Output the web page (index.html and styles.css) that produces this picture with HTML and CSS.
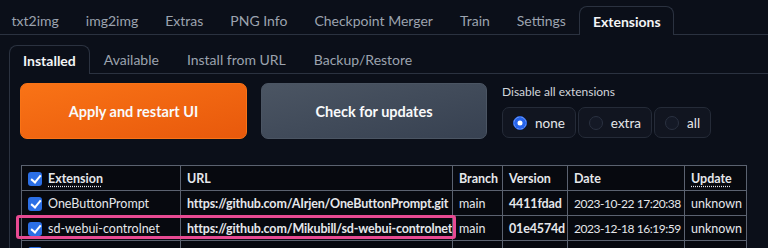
FILE: index.html
```html
<!DOCTYPE html>
<html lang="en">
<head>
<meta charset="utf-8">
<title>Extensions</title>
<link rel="stylesheet" href="styles.css">
</head>
<body>
<div class="app">
  <nav class="tabs top-tabs">
    <button class="tab">txt2img</button>
    <button class="tab">img2img</button>
    <button class="tab">Extras</button>
    <button class="tab">PNG Info</button>
    <button class="tab">Checkpoint Merger</button>
    <button class="tab">Train</button>
    <button class="tab">Settings</button>
    <button class="tab selected">Extensions</button>
  </nav>
  <div class="outer-panel">
    <nav class="tabs inner-tabs">
      <button class="tab selected">Installed</button>
      <button class="tab">Available</button>
      <button class="tab">Install from URL</button>
      <button class="tab">Backup/Restore</button>
    </nav>
    <div class="inner-panel">
      <div class="controls">
        <button class="btn primary">Apply and restart UI</button>
        <button class="btn secondary">Check for updates</button>
        <div class="radio-group">
          <div class="radio-label">Disable all extensions</div>
          <div class="radio-options">
            <label class="radio-opt"><span class="radio checked"></span>none</label>
            <label class="radio-opt"><span class="radio"></span>extra</label>
            <label class="radio-opt"><span class="radio"></span>all</label>
          </div>
        </div>
      </div>
      <div class="table-wrap">
        <table class="ext-table">
          <colgroup>
            <col class="w-ext"><col class="w-url"><col class="w-branch"><col class="w-ver"><col class="w-date"><col class="w-upd">
          </colgroup>
          <thead>
            <tr>
              <th><span class="cb"></span><abbr>Extension</abbr></th>
              <th>URL</th>
              <th>Branch</th>
              <th>Version</th>
              <th>Date</th>
              <th><abbr>Update</abbr></th>
            </tr>
          </thead>
          <tbody>
            <tr>
              <td><span class="cb"></span>OneButtonPrompt</td>
              <td class="b">https://github.com/AIrjen/OneButtonPrompt.git</td>
              <td>main</td>
              <td class="b">4411fdad</td>
              <td class="date">2023-10-22 17:20:38</td>
              <td>unknown</td>
            </tr>
            <tr>
              <td><span class="cb"></span>sd-webui-controlnet</td>
              <td class="b">https://github.com/Mikubill/sd-webui-controlnet</td>
              <td>main</td>
              <td class="b">01e4574d</td>
              <td class="date">2023-12-18 16:19:59</td>
              <td>unknown</td>
            </tr>
            <tr>
              <td><span class="cb"></span></td>
              <td></td>
              <td></td>
              <td></td>
              <td></td>
              <td></td>
            </tr>
          </tbody>
        </table>
        <div class="highlight"></div>
      </div>
    </div>
  </div>
</div>
</body>
</html>
```
FILE: styles.css
```css
* { box-sizing: border-box; }
html, body { margin: 0; padding: 0; }
body {
  background: #0b0f19;
  color: #e5e7eb;
  font-family: Lato, "Noto Sans", sans-serif;
  width: 768px;
  height: 248px;
  overflow: hidden;
}
.app { padding-top: 6px; }

.tabs {
  display: flex;
  border-bottom: 1px solid #2b3240;
}
.tab {
  font: inherit;
  font-size: 14px;
  background: none;
  color: #9ca3af;
  border: 1px solid transparent;
  border-bottom: none;
  border-radius: 8px 8px 0 0;
  height: 28px;
  padding: 0 13px;
  margin: 0 0 -1px 0;
  white-space: nowrap;
  cursor: pointer;
}
.top-tabs .tab { padding: 0 12.5px; }
.tab.selected {
  color: #f3f4f6;
  font-weight: 700;
  border-color: #2b3240;
  background: #0b0f19;
  height: 29px;
}
.top-tabs .tab:first-child { margin-left: -2px; }

.outer-panel { padding: 10px 0 0 9px; }

.inner-panel {
  border-left: 1px solid #2b3240;
  padding: 9px 0 0 10px;
  height: 200px;
}

.controls {
  display: flex;
  align-items: flex-start;
}
.btn {
  font: inherit;
  font-size: 14.5px;
  font-weight: 700;
  color: #f9fafb;
  width: 227px;
  height: 56px;
  border-radius: 7px;
  border: 1px solid transparent;
  cursor: pointer;
}
.primary {
  background: linear-gradient(to bottom right, #f97316, #e8590c);
  border-color: #f97316;
}
.secondary {
  width: 226px;
  margin-left: 14px;
  background: linear-gradient(to bottom right, #4b5563, #374151);
  border-color: #4b5563;
}
.radio-group { margin-left: 15px; }
.radio-label {
  font-size: 12px;
  color: #d1d5db;
  line-height: 18px;
}
.radio-options {
  display: flex;
  gap: 2px;
  margin-top: 6px;
}
.radio-opt {
  display: flex;
  align-items: center;
  height: 31px;
  padding: 0 10px 0 10px;
  background: #111520;
  border: 1px solid #252b38;
  border-radius: 7px;
  font-size: 13.5px;
  color: #e5e7eb;
}
.radio {
  width: 14px;
  height: 14px;
  border-radius: 50%;
  border: 1px solid #2a3140;
  background: #141926;
  margin-right: 8px;
}
.radio.checked {
  background: #ffffff;
  border-color: #2563eb;
  box-shadow: inset 0 0 0 3.5px #2563eb;
}

.table-wrap {
  position: relative;
  margin-top: 26px;
  margin-left: 1px;
}
.ext-table {
  border-collapse: collapse;
  table-layout: fixed;
  width: 725px;
  font-size: 12.5px;
  color: #e5e7eb;
}
.w-ext { width: 159px; }
.w-url { width: 272px; }
.w-branch { width: 50px; }
.w-ver { width: 65px; }
.w-date { width: 117px; }
.w-upd { width: 62px; }
.ext-table th, .ext-table td {
  border: 1px solid #5b6270;
  height: 25px;
  padding: 0 0 0 6px;
  text-align: left;
  white-space: nowrap;
  overflow: hidden;
  background: #07090f;
}
.ext-table th { font-weight: 700; }
.ext-table td.b { font-weight: 700; letter-spacing: -0.15px; }
.ext-table td.date { font-size: 12px; letter-spacing: -0.45px; }
.ext-table abbr {
  text-decoration: underline dotted;
  text-underline-offset: 3px;
}
.cb {
  display: inline-block;
  vertical-align: -3px;
  width: 14px;
  height: 14px;
  border-radius: 3px;
  background: #2b6fe6;
  margin-right: 6px;
  position: relative;
}
.cb::after {
  content: "";
  position: absolute;
  left: 4.5px;
  top: 1.5px;
  width: 4px;
  height: 8px;
  border: solid #fff;
  border-width: 0 2px 2px 0;
  transform: rotate(40deg);
}

.highlight {
  position: absolute;
  left: -5px;
  top: 50px;
  width: 440px;
  height: 24px;
  border: 3px solid #e84a92;
  border-radius: 3px;
  pointer-events: none;
}
```
